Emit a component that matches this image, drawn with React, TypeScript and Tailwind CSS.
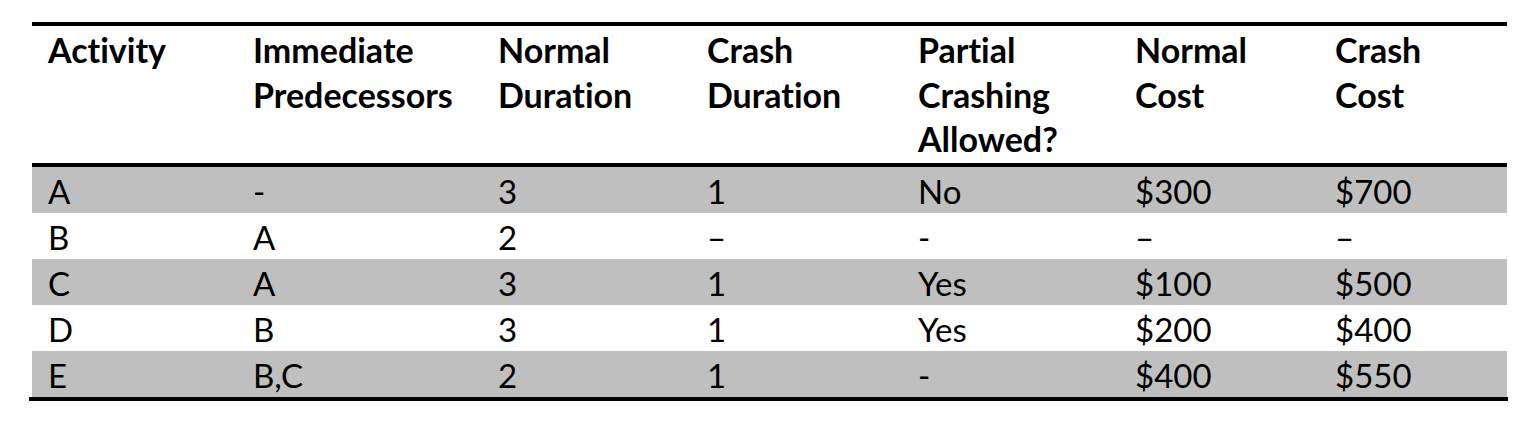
import React from "react";

const cols = "grid grid-cols-[205px_245px_209px_211px_217px_200px_188px]";

const headers: string[][] = [
  ["Activity"],
  ["Immediate", "Predecessors"],
  ["Normal", "Duration"],
  ["Crash", "Duration"],
  ["Partial", "Crashing", "Allowed?"],
  ["Normal", "Cost"],
  ["Crash", "Cost"],
];

const rows: string[][] = [
  ["A", "-", "3", "1", "No", "$300", "$700"],
  ["B", "A", "2", "\u2013", "-", "\u2013", "\u2013"],
  ["C", "A", "3", "1", "Yes", "$100", "$500"],
  ["D", "B", "3", "1", "Yes", "$200", "$400"],
  ["E", "B,C", "2", "1", "-", "$400", "$550"],
];

export default function App() {
  return (
    <div
      className="w-[1524px] h-[422px] bg-white text-black pt-[22px] pl-[32px] [font-variant-ligatures:none]"
      style={{ fontFamily: "Lato, 'Open Sans', sans-serif" }}
    >
      <div className="w-[1475px]">
        <div className="h-[4px] bg-black" />
        <div className={`${cols} h-[137px] pt-[2px]`}>
          {headers.map((h, i) => (
            <div key={i} className="pl-[16px] text-[34px] font-bold leading-[44.5px] whitespace-nowrap">
              {h.map((line, j) => (
                <div key={j}>{line}</div>
              ))}
            </div>
          ))}
        </div>
        <div className="h-[4px] bg-black" />
        {rows.map((r, i) => (
          <div
            key={i}
            className={`${cols} h-[46px] pt-[2px] ${i % 2 === 0 ? "bg-[#bfbfbf]" : "bg-white"}`}
          >
            {r.map((c, j) => (
              <div key={j} className="pl-[16px] text-[33px] leading-[44px] whitespace-nowrap">
                {c}
              </div>
            ))}
          </div>
        ))}
        <div className="h-[4px] bg-black -ml-[3px] w-[1479px]" />
      </div>
    </div>
  );
}
